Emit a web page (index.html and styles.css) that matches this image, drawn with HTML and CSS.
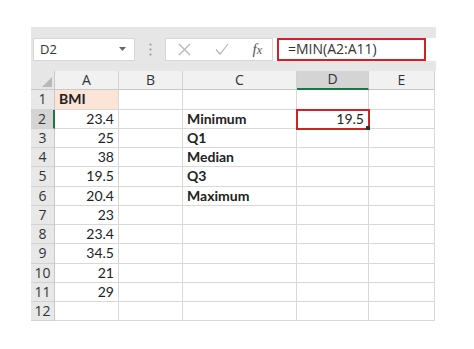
FILE: index.html
```html
<!DOCTYPE html>
<html lang="en">
<head>
  <meta charset="UTF-8">
  <meta name="viewport" content="width=device-width, initial-scale=1.0">
  <title>BMI quartiles</title>
  <link rel="stylesheet" href="styles.css">
</head>
<body>

  <div class="excel">
    <!-- barra de formulas -->
    <div class="formula-bar">
      <div class="name-box">
        <span>D2</span>
        <svg class="caret" width="7" height="4" viewBox="0 0 7 4"><path d="M0 0h7L3.5 4z" fill="#666"/></svg>
      </div>
      <div class="dots">
        <svg width="3" height="13" viewBox="0 0 3 13"><circle cx="1.5" cy="1.5" r="1.1" fill="#999"/><circle cx="1.5" cy="6.5" r="1.1" fill="#999"/><circle cx="1.5" cy="11.5" r="1.1" fill="#999"/></svg>
      </div>
      <div class="fx-box">
        <svg width="13" height="13" viewBox="0 0 13 13"><path d="M1 1l11 11M12 1L1 12" stroke="#b4b4b4" stroke-width="1.2" fill="none"/></svg>
        <svg width="14" height="12" viewBox="0 0 14 12"><path d="M1 6.5l4 4.5L13 1" stroke="#b4b4b4" stroke-width="1.2" fill="none"/></svg>
        <span class="fx">f<i>x</i></span>
      </div>
      <div class="formula">
        <div class="formula-text">=MIN(A2:A11)</div>
      </div>
    </div>

    <div class="sheet">
      <div class="corner"><svg width="10" height="10" viewBox="0 0 10 10"><path d="M10 0V10H0z" fill="#b9b9b9"/></svg></div>
      <div class="col-hd">A</div>
      <div class="col-hd">B</div>
      <div class="col-hd">C</div>
      <div class="col-hd active">D</div>
      <div class="col-hd">E</div>
    </div>

    <div class="sheet" id="rows"></div>
  </div>

  <script>
    const colA = ['BMI', '23.4', '25', '38', '19.5', '20.4', '23', '23.4', '34.5', '21', '29', ''];
    const colC = ['', 'Minimum', 'Q1', 'Median', 'Q3', 'Maximum', '', '', '', '', '', ''];

    const rows = document.getElementById('rows');
    colA.forEach(function(a, i) {
      const n = i + 1;
      let html = '<div class="row-hd' + (n === 2 ? ' active' : '') + '">' + n + '</div>';
      if (n === 1) {
        html += '<div class="cell head">' + a + '</div>';
      } else {
        html += '<div class="cell num">' + a + '</div>';
      }
      html += '<div class="cell"></div>';
      html += '<div class="cell label">' + colC[i] + '</div>';
      if (n === 2) {
        html += '<div class="cell num selected">19.5<span class="handle"></span></div>';
      } else {
        html += '<div class="cell"></div>';
      }
      html += '<div class="cell"></div>';
      rows.insertAdjacentHTML('beforeend', html);
    });
  </script>

</body>
</html>
```

FILE: styles.css
```css
body {
  margin: 0;
  background: #fff;
  font-family: "Open Sans", "Noto Sans", sans-serif;
}
.excel {
  width: 405px;
  margin: 27px 0 0 31px;
}
.formula-bar {
  display: flex;
  align-items: center;
  height: 44px;
  background: #e6e6e6;
  padding-left: 2px;
  box-sizing: border-box;
}
.name-box {
  display: flex;
  align-items: center;
  justify-content: space-between;
  width: 102px;
  height: 23px;
  box-sizing: border-box;
  padding: 0 8px 0 6px;
  background: #fff;
  border: 1px solid #d6d6d6;
  font-size: 13px;
  color: #333;
}
.dots {
  width: 30px;
  display: flex;
  justify-content: center;
}
.fx-box {
  display: flex;
  align-items: center;
  justify-content: space-between;
  width: 108px;
  height: 23px;
  box-sizing: border-box;
  padding: 0 10px 0 12px;
  background: #fff;
  border: 1px solid #d6d6d6;
}
.fx {
  font-family: "Liberation Serif", serif;
  font-style: italic;
  font-size: 15px;
  color: #555;
}
.fx i {
  font-size: 12px;
}
.formula {
  flex: 1;
  height: 23px;
  background: #fff;
  padding-left: 4px;
}
.formula-text {
  width: 149px;
  height: 23px;
  box-sizing: border-box;
  border: 2px solid #d0202a;
  padding-left: 9px;
  font-size: 14px;
  line-height: 18px;
  color: #333;
}
.sheet {
  display: grid;
  grid-template-columns: 24px 64px 64px 114px 72px 66px;
  grid-auto-rows: 19.25px;
  font-size: 14px;
  color: #222;
}
.sheet:first-of-type {
  grid-auto-rows: 18px;
}
.corner {
  background: #e6e6e6;
  border-right: 1px solid #c8c8c8;
  border-bottom: 1px solid #c8c8c8;
  display: flex;
  align-items: flex-end;
  justify-content: flex-end;
  padding: 0 2px 2px 0;
}
.col-hd {
  background: #f1f1f1;
  border-right: 1px solid #d2d2d2;
  border-bottom: 1px solid #c8c8c8;
  text-align: center;
  line-height: 17px;
  font-size: 14px;
  color: #333;
}
.col-hd.active {
  background: #d4d4d4;
  border-bottom: 2px solid #217346;
  line-height: 16px;
}
.row-hd {
  background: #e8e8e8;
  border-right: 1px solid #c8c8c8;
  border-bottom: 1px solid #d2d2d2;
  text-align: center;
  font-size: 14px;
  line-height: 18px;
  color: #333;
}
.row-hd.active {
  background: #d4d4d4;
  border-right: 2px solid #217346;
}
.cell {
  border-right: 1px solid #d8d8d8;
  border-bottom: 1px solid #d8d8d8;
  line-height: 18px;
  padding: 0 4px;
  white-space: nowrap;
  font-family: "Lato", "Open Sans", sans-serif;
}
.cell.num {
  text-align: right;
}
.cell.head {
  background: #fce4d6;
  font-weight: bold;
}
.cell.label {
  font-weight: bold;
}
.cell.selected {
  position: relative;
  outline: 2px solid #d0202a;
  outline-offset: -1px;
}
.handle {
  position: absolute;
  right: -2px;
  bottom: -2px;
  width: 4px;
  height: 4px;
  background: #1d3a2a;
}
```
